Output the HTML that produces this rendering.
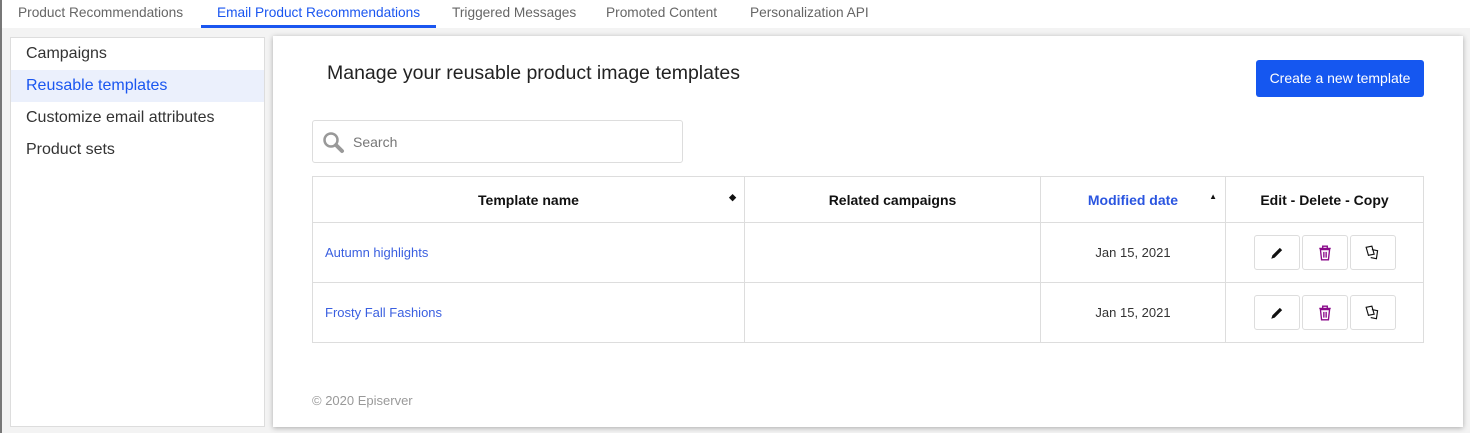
<!DOCTYPE html>
<html><head><style>
*{box-sizing:border-box;margin:0;padding:0}
body{width:1470px;height:433px;background:#f3f3f3;font-family:"Liberation Sans",sans-serif;position:relative;overflow:hidden}
.lb{position:absolute;left:0;top:0;width:2px;height:433px;background:#777}
.tabs{position:absolute;left:0;top:0;width:1470px;height:28px;background:#fff}
.tab{position:absolute;top:5px;font-size:13.7px;color:#666}
.tab.act{color:#1a56f0}
.ul{position:absolute;left:201px;top:25px;width:235px;height:3px;background:#1a56f0}
.side{position:absolute;left:10px;top:37px;width:255px;height:390px;background:#fff;border:1px solid #ddd}
.side div{height:32px;line-height:32px;padding-left:15px;font-size:16px;color:#333}
.side .sel{background:#ebf0fc;color:#1a56f0}
.main{position:absolute;left:273px;top:36px;width:1190px;height:391px;background:#fff;box-shadow:0 1px 5px rgba(0,0,0,.3)}
h1{position:absolute;left:54px;top:26px;font-size:19.5px;font-weight:normal;color:#222}
.btn{position:absolute;left:983px;top:24px;width:168px;height:37px;background:#1557f0;border-radius:3px;color:#fff;font-size:14px;text-align:center;line-height:37px}
.search{position:absolute;left:39px;top:84px;width:371px;height:43px;border:1px solid #ddd;border-radius:3px}
.search span{position:absolute;left:40px;top:13px;font-size:14px;color:#777}
table{position:absolute;left:39px;top:140px;width:1112px;border-collapse:collapse;font-size:13px}
td,th{border:1px solid #ddd;text-align:center}
th{height:46px;font-weight:bold;color:#111;font-size:14px}
td{height:60px;color:#333}
td.l{text-align:left;padding-left:12px;color:#3a5fe0}
.ib{display:inline-block;width:46px;height:35px;border:1px solid #ddd;border-radius:3px;margin:0 1px;vertical-align:middle;position:relative}
.ib svg{position:absolute;left:14px;top:9px}
.foot{position:absolute;left:39px;top:357px;font-size:13px;color:#999}
</style></head><body>
<div class="tabs">
<span class="tab" style="left:18px">Product Recommendations</span>
<span class="tab act" style="left:217px">Email Product Recommendations</span>
<span class="tab" style="left:452px">Triggered Messages</span>
<span class="tab" style="left:606px">Promoted Content</span>
<span class="tab" style="left:750px">Personalization API</span>
<div class="ul"></div></div>
<div class="lb"></div>
<div class="side"><div>Campaigns</div><div class="sel">Reusable templates</div><div>Customize email attributes</div><div>Product sets</div></div>
<div class="main">
<h1>Manage your reusable product image templates</h1>
<div class="btn">Create a new template</div>
<div class="search"><svg width="24" height="24" style="position:absolute;left:9px;top:10px" viewBox="0 0 24 24"><circle cx="9" cy="9" r="6.5" fill="none" stroke="#999" stroke-width="2.5"/><path d="M14 14l6 6" stroke="#999" stroke-width="4" stroke-linecap="round"/></svg><span>Search</span></div>
<table>
<tr><th style="width:432px;position:relative">Template name<span style="position:absolute;right:8px;font-size:9px">&#9670;</span></th><th style="width:296px">Related campaigns</th><th style="width:185px;color:#2a55e0;position:relative">Modified date<span style="position:absolute;right:8px;font-size:8px;color:#111">&#9650;</span></th><th>Edit - Delete - Copy</th></tr>
<tr><td class="l">Autumn highlights</td><td></td><td>Jan 15, 2021</td><td><span class="ib"><svg width="16" height="16" viewBox="0 0 14 14"><path d="M2 12l1-3 6.5-6.5 2 2L5 11z" fill="#111"/></svg></span><span class="ib"><svg width="16" height="16" viewBox="0 0 14 14"><path d="M2 3h10M5 3V1h4v2M3 4h8l-1 9H4z M6 6v5M8 6v5" fill="none" stroke="#8a0a8a" stroke-width="1.2"/></svg></span><span class="ib"><svg width="16" height="16" viewBox="0 0 14 14"><path d="M1 2l5-1 2 7-5 1zM6 4l5 1-1 7-5-1" fill="none" stroke="#111"/></svg></span></td></tr>
<tr><td class="l">Frosty Fall Fashions</td><td></td><td>Jan 15, 2021</td><td><span class="ib"><svg width="16" height="16" viewBox="0 0 14 14"><path d="M2 12l1-3 6.5-6.5 2 2L5 11z" fill="#111"/></svg></span><span class="ib"><svg width="16" height="16" viewBox="0 0 14 14"><path d="M2 3h10M5 3V1h4v2M3 4h8l-1 9H4z M6 6v5M8 6v5" fill="none" stroke="#8a0a8a" stroke-width="1.2"/></svg></span><span class="ib"><svg width="16" height="16" viewBox="0 0 14 14"><path d="M1 2l5-1 2 7-5 1zM6 4l5 1-1 7-5-1" fill="none" stroke="#111"/></svg></span></td></tr>
</table>
<div class="foot">© 2020 Episerver</div>
</div>
</body></html>
